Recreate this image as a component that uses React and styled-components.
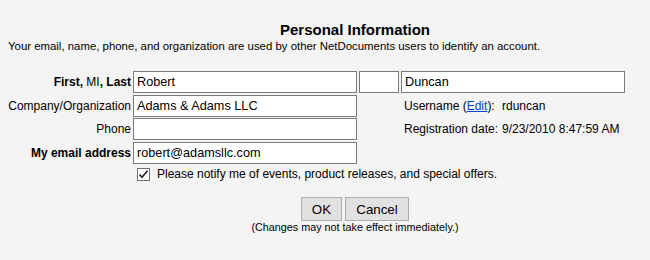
import styled, { createGlobalStyle } from "styled-components";

const GlobalStyle = createGlobalStyle`
  html, body {
    margin: 0;
    padding: 0;
    background: #f4f4f4;
  }
  body {
    padding: 8px;
    font-family: "Liberation Sans", Arial, sans-serif;
    color: #000;
  }
`;

const Page = styled.div`
  width: 100%;
`;

// the page's centre column sits a little right of the frame centre
const Centered = styled.div`
  padding-left: 60px;
  text-align: center;
`;

const Title = styled.h2`
  margin: 13px 0 0;
  font-size: 15px;
  font-weight: bold;
  line-height: 18px;
`;

const Intro = styled.p`
  margin: 0;
  font-size: 11.4px;
  line-height: 14px;
`;

const FormGrid = styled.div`
  display: grid;
  grid-template-columns: 123px 224px 40px 224px;
  column-gap: 2px;
  row-gap: 1.5px;
  margin-top: 18px;
  align-items: center;
`;

const Label = styled.label`
  text-align: right;
  font-size: 12px;
  font-weight: ${p => (p.$bold ? "bold" : "normal")};
  white-space: nowrap;

  & span {
    font-weight: normal;
  }
`;

const TextBox = styled.input`
  box-sizing: border-box;
  width: 100%;
  height: 22px;
  margin: 0;
  padding: 1px 3px;
  border: 1px solid #7a7a7a;
  background: #fff;
  font-family: "Liberation Sans", Arial, sans-serif;
  font-size: 12.7px;
  color: #000;
  outline: none;
`;

const Info = styled.div`
  display: flex;
  padding-left: 3px;
  font-size: 12px;
  white-space: nowrap;
`;

const InfoKey = styled.span`
  width: 98px;
  flex: none;
`;

const EditLink = styled.a`
  color: #0645c8;
  text-decoration: underline;
  cursor: pointer;
`;

const CheckRow = styled.label`
  grid-column: 2 / span 3;
  display: flex;
  align-items: center;
  gap: 7px;
  padding: 2px 0 0 4px;
  font-size: 12px;
  cursor: pointer;
`;

const CheckBox = styled.span`
  box-sizing: border-box;
  width: 13px;
  height: 13px;
  border: 1px solid #707070;
  background: #fff;
  display: flex;
  align-items: center;
  justify-content: center;
`;

const Actions = styled.div`
  display: flex;
  justify-content: center;
  gap: 3px;
  margin-top: 16px;
`;

const Button = styled.button`
  box-sizing: border-box;
  height: 24px;
  min-width: ${p => p.$min || "auto"};
  padding: 0 8px;
  border: 1px solid #adadad;
  border-radius: 0;
  background: #e1e1e1;
  font-family: "Liberation Sans", Arial, sans-serif;
  font-size: 13.33px;
  color: #000;
`;

const Note = styled.div`
  font-size: 10.8px;
  line-height: 13px;
`;

export default function App() {
  return (
    <Page>
      <GlobalStyle />
      <Centered>
        <Title>Personal Information</Title>
      </Centered>
      <Intro>
        Your email, name, phone, and organization are used by other
        NetDocuments users to identify an account.
      </Intro>

      <FormGrid>
        <Label $bold>
          First, <span>MI</span>, Last
        </Label>
        <TextBox defaultValue="Robert" />
        <TextBox defaultValue="" />
        <TextBox defaultValue="Duncan" />

        <Label>Company/Organization</Label>
        <TextBox defaultValue="Adams & Adams LLC" />
        <div />
        <Info>
          <InfoKey>
            Username (<EditLink>Edit</EditLink>):
          </InfoKey>
          <span>rduncan</span>
        </Info>

        <Label>Phone</Label>
        <TextBox defaultValue="" />
        <div />
        <Info>
          <InfoKey>Registration date:</InfoKey>
          <span>9/23/2010 8:47:59 AM</span>
        </Info>

        <Label $bold>My email address</Label>
        <TextBox defaultValue="robert@adamsllc.com" />
        <div />
        <div />

        <div />
        <CheckRow>
          <CheckBox>
            <svg width="11" height="11" viewBox="0 0 11 11">
              <path
                d="M1.5 5.5 L4 8.3 L9.5 1.8"
                fill="none"
                stroke="#222"
                strokeWidth="1.6"
              />
            </svg>
          </CheckBox>
          Please notify me of events, product releases, and special offers.
        </CheckRow>
      </FormGrid>

      <Centered>
        <Actions>
          <Button $min="41px">OK</Button>
          <Button $min="64px">Cancel</Button>
        </Actions>
        <Note>(Changes may not take effect immediately.)</Note>
      </Centered>
    </Page>
  );
}
